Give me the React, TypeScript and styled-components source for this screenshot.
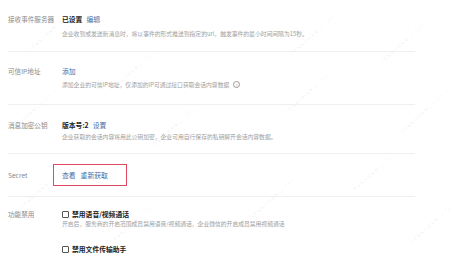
import React from "react";
import styled, { createGlobalStyle } from "styled-components";

const Global = createGlobalStyle`
  html, body { margin: 0; padding: 0; background: #fff; }
  body { font-family: "Noto Sans CJK SC", "Noto Sans", sans-serif; }
`;

const Page = styled.div`
  position: relative;
  width: 474px;
  height: 253px;
  overflow: hidden;
  background: #fff;
`;

const List = styled.div`
  width: 407px;
  margin-left: 8px;
  display: flex;
  flex-direction: column;
`;

const Section = styled.div<{ $pt: number; $pb: number; $last?: boolean }>`
  display: flex;
  align-items: flex-start;
  padding-top: ${(p) => p.$pt}px;
  padding-bottom: ${(p) => p.$pb}px;
  border-bottom: ${(p) => (p.$last ? "none" : "1px solid #efefef")};
`;

const Label = styled.div<{ $mt?: number }>`
  width: 54px;
  flex: none;
  font-size: 6.6px;
  line-height: 12px;
  color: #8a8a8a;
  white-space: nowrap;
  margin-top: ${(p) => p.$mt ?? 0}px;
`;

const Body = styled.div`
  display: flex;
  flex-direction: column;
`;

const ValueLine = styled.div`
  display: flex;
  align-items: center;
  gap: 4px;
  font-size: 6.8px;
  line-height: 12px;
  color: #222;
`;

const Strong = styled.span`
  font-weight: 700;
  color: #222;
`;

const Link = styled.span`
  color: #3f6ea8;
`;

const Desc = styled.div<{ $mt?: number }>`
  margin-top: ${(p) => p.$mt ?? 3}px;
  font-size: 5.8px;
  line-height: 9px;
  color: #a0a0a0;
  white-space: nowrap;
  display: flex;
  align-items: center;
  gap: 2px;
`;

const InfoIcon = styled.span`
  display: inline-flex;
  align-items: center;
  justify-content: center;
  width: 5px;
  height: 5px;
  border: 0.8px solid #999;
  border-radius: 50%;
  font-size: 4px;
  line-height: 1;
  color: #999;
  margin-left: 2px;
`;

const HighlightBox = styled.div`
  margin-left: -9px;
  width: 74px;
  height: 22px;
  border: 1.2px solid #e0495f;
  display: flex;
  align-items: center;
  padding-left: 8px;
  gap: 5px;
  font-size: 6.8px;
  color: #3f6ea8;
  box-sizing: border-box;
`;

const CheckRow = styled.div<{ $mt?: number }>`
  display: flex;
  align-items: center;
  gap: 3px;
  margin-top: ${(p) => p.$mt ?? 0}px;
  font-size: 6.8px;
  line-height: 12px;
  color: #222;
  font-weight: 700;
`;

const Box = styled.span`
  width: 5px;
  height: 5px;
  border: 0.8px solid #555;
  border-radius: 1px;
  background: #fff;
  flex: none;
`;

const Watermark = styled.div`
  position: absolute;
  font-size: 4.6px;
  color: rgba(0, 0, 0, 0.07);
  white-space: nowrap;
  transform: rotate(-42deg);
  transform-origin: left center;
  pointer-events: none;
  font-family: "Noto Sans CJK SC", sans-serif;
`;

const marks = [
  { x: 28, y: 48 },
  { x: 110, y: 88 },
  { x: 290, y: 52 },
  { x: 380, y: 60 },
  { x: 400, y: 130 },
  { x: 8, y: 130 },
  { x: 150, y: 145 },
  { x: 285, y: 110 },
  { x: 20, y: 205 },
  { x: 110, y: 240 },
  { x: 250, y: 215 },
  { x: 350, y: 190 },
  { x: 410, y: 240 },
];

export default function App() {
  return (
    <Page>
      <Global />
      <List>
        <Section $pt={13} $pb={13}>
          <Label>接收事件服务器</Label>
          <Body>
            <ValueLine>
              <Strong>已设置</Strong>
              <Link>编辑</Link>
            </ValueLine>
            <Desc $mt={4}>
              企业收到或发送新消息时，将以事件的形式推送到指定的url，触发事件的最小时间间隔为15秒。
            </Desc>
          </Body>
        </Section>
        <Section $pt={13} $pb={15}>
          <Label>可信IP地址</Label>
          <Body>
            <ValueLine>
              <Link>添加</Link>
            </ValueLine>
            <Desc $mt={3}>
              添加企业的可信IP地址，仅添加的IP可通过接口获取会话内容数据
              <InfoIcon>?</InfoIcon>
            </Desc>
          </Body>
        </Section>
        <Section $pt={14} $pb={12}>
          <Label>消息加密公钥</Label>
          <Body>
            <ValueLine>
              <Strong>版本号:2</Strong>
              <Link>设置</Link>
            </ValueLine>
            <Desc $mt={1}>
              企业获取的会话内容将用此公钥加密，企业可用自行保存的私钥解开会话内容数据。
            </Desc>
          </Body>
        </Section>
        <Section $pt={10} $pb={10}>
          <Label $mt={5}>Secret</Label>
          <HighlightBox>
            <span>查看</span>
            <span>重新获取</span>
          </HighlightBox>
        </Section>
        <Section $pt={11} $pb={0} $last>
          <Label>功能禁用</Label>
          <Body>
            <CheckRow>
              <Box />
              禁用语音/视频通话
            </CheckRow>
            <Desc $mt={-1}>
              开启后，服务商的开启范围成员禁用语音/视频通话，企业微信的开启成员禁用视频通话
            </Desc>
            <CheckRow $mt={15}>
              <Box />
              禁用文件传输助手
            </CheckRow>
          </Body>
        </Section>
      </List>
      {marks.map((m, i) => (
        <Watermark key={i} style={{ left: m.x, top: m.y }}>
          北京某某科技有限公司 0065
        </Watermark>
      ))}
    </Page>
  );
}
